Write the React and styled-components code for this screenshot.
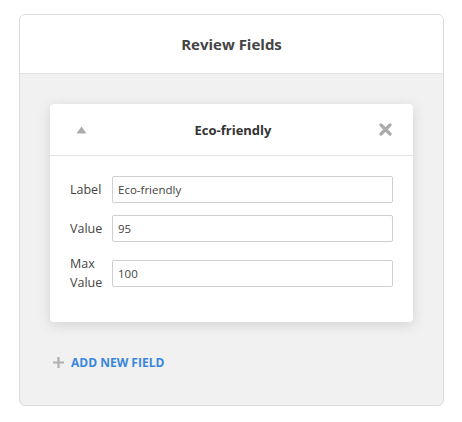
import React from 'react';
import styled, {createGlobalStyle} from 'styled-components';

const GlobalStyle = createGlobalStyle`
    body {
        margin: 0;
        background: #ffffff;
        font-family: "Open Sans", "Noto Sans", sans-serif;
    }
`

const Page = styled.div`
    padding: 14px 18px 17px 19px;
`

const Panel = styled.div`
    width: 423px;
    border: 1px solid #dcdcdc;
    border-radius: 6px;
    overflow: hidden;
    background: #f1f1f1;
`

const PanelHeader = styled.div`
    height: 58px;
    background: #ffffff;
    border-bottom: 1px solid #e2e2e2;
    display: flex;
    align-items: center;
    justify-content: center;
    font-size: 15px;
    font-weight: 700;
    color: #444444;
`

const PanelBody = styled.div`
    padding: 30px 30px 34px 30px;
`

const Card = styled.div`
    background: #ffffff;
    border-radius: 4px;
    box-shadow: 0 3px 14px rgba(0, 0, 0, 0.13);
`

const CardHeader = styled.div`
    height: 51px;
    display: flex;
    align-items: center;
    padding: 0 21px 0 24px;
    border-bottom: 1px solid #e3e3e3;
`

const CardTitle = styled.div`
    flex: 1;
    text-align: center;
    font-size: 13px;
    font-weight: 700;
    color: #333333;
`

const IconButton = styled.button`
    border: none;
    background: none;
    padding: 0;
    display: flex;
    align-items: center;
    justify-content: center;
    width: 14px;
    height: 14px;
    cursor: pointer;
`

const CardBody = styled.div`
    padding: 20px 20px 30px 20px;
    display: grid;
    grid-template-columns: 30px 1fr;
    column-gap: 12px;
    row-gap: 12px;
    align-items: center;
`

const FieldLabel = styled.label`
    font-size: 12.5px;
    line-height: 19px;
    color: #444444;
`

const FieldInput = styled.input`
    box-sizing: border-box;
    height: 27px;
    width: 100%;
    border: 1px solid #cfcfcf;
    border-radius: 2px;
    padding: 0 5px;
    font-family: inherit;
    font-size: 11.5px;
    color: #444444;
    outline: none;
`

const AddButton = styled.button`
    margin-top: 32px;
    margin-left: 3px;
    border: none;
    background: none;
    padding: 0;
    display: flex;
    align-items: center;
    gap: 7px;
    font-family: inherit;
    font-size: 12px;
    font-weight: 700;
    color: #3a86dd;
    cursor: pointer;
`

const fields = [
    {label: 'Label', value: 'Eco-friendly'},
    {label: 'Value', value: '95'},
    {label: 'Max Value', value: '100'},
]

function App() {
    return (
        <Page>
            <GlobalStyle />
            <Panel>
                <PanelHeader>Review Fields</PanelHeader>
                <PanelBody>
                    <Card>
                        <CardHeader>
                            <IconButton>
                                <svg width="11" height="8" viewBox="0 0 11 8">
                                    <path d="M5.5 0.5 L10.5 7.5 L0.5 7.5 Z" fill="#ababab" />
                                </svg>
                            </IconButton>
                            <CardTitle>Eco-friendly</CardTitle>
                            <IconButton>
                                <svg width="13" height="13" viewBox="0 0 13 13">
                                    <path d="M2 2 L11 11 M11 2 L2 11" stroke="#ababab" strokeWidth="3.2" strokeLinecap="round" />
                                </svg>
                            </IconButton>
                        </CardHeader>
                        <CardBody>
                            {fields.map(f => (
                                <React.Fragment key={f.label}>
                                    <FieldLabel>{f.label}</FieldLabel>
                                    <FieldInput defaultValue={f.value} />
                                </React.Fragment>
                            ))}
                        </CardBody>
                    </Card>
                    <AddButton>
                        <svg width="11" height="11" viewBox="0 0 11 11">
                            <path d="M5.5 0 V11 M0 5.5 H11" stroke="#b0b0b0" strokeWidth="2.2" />
                        </svg>
                        ADD NEW FIELD
                    </AddButton>
                </PanelBody>
            </Panel>
        </Page>
    )
}

export default App;
